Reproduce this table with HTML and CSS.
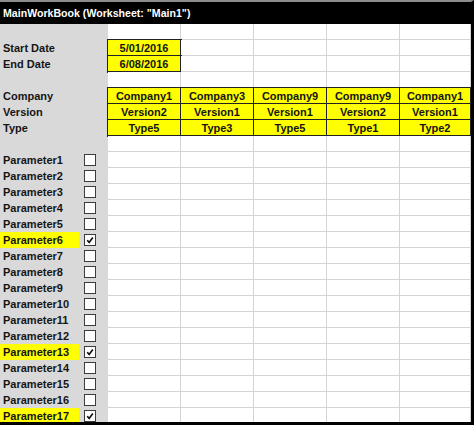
FILE: index.html
```html
<!DOCTYPE html>
<html>
<head>
<meta charset="utf-8">
<link rel="stylesheet" href="styles.css">
</head>
<body>
<div class="window">
  <div class="title">MainWorkBook (Worksheet: "Main1")</div>
  <div class="sheet">
    <div class="row"><div class="label"></div><div class="chk"></div><div class="cell"></div><div class="cell"></div><div class="cell"></div><div class="cell"></div><div class="cell"></div></div>
    <div class="row"><div class="label">Start Date</div><div class="chk"></div><div class="cell y">5/01/2016</div><div class="cell"></div><div class="cell"></div><div class="cell"></div><div class="cell"></div></div>
    <div class="row"><div class="label">End Date</div><div class="chk"></div><div class="cell y">6/08/2016</div><div class="cell"></div><div class="cell"></div><div class="cell"></div><div class="cell"></div></div>
    <div class="row"><div class="label"></div><div class="chk"></div><div class="cell"></div><div class="cell"></div><div class="cell"></div><div class="cell"></div><div class="cell"></div></div>
    <div class="row"><div class="label">Company</div><div class="chk"></div><div class="cell y">Company1</div><div class="cell y">Company3</div><div class="cell y">Company9</div><div class="cell y">Company9</div><div class="cell y">Company1</div></div>
    <div class="row"><div class="label">Version</div><div class="chk"></div><div class="cell y">Version2</div><div class="cell y">Version1</div><div class="cell y">Version1</div><div class="cell y">Version2</div><div class="cell y">Version1</div></div>
    <div class="row"><div class="label">Type</div><div class="chk"></div><div class="cell y">Type5</div><div class="cell y">Type3</div><div class="cell y">Type5</div><div class="cell y">Type1</div><div class="cell y">Type2</div></div>
    <div class="row"><div class="label"></div><div class="chk"></div><div class="cell"></div><div class="cell"></div><div class="cell"></div><div class="cell"></div><div class="cell"></div></div>
    <div class="row"><div class="label">Parameter1</div><div class="chk"><span class="box"></span></div><div class="cell"></div><div class="cell"></div><div class="cell"></div><div class="cell"></div><div class="cell"></div></div>
    <div class="row"><div class="label">Parameter2</div><div class="chk"><span class="box"></span></div><div class="cell"></div><div class="cell"></div><div class="cell"></div><div class="cell"></div><div class="cell"></div></div>
    <div class="row"><div class="label">Parameter3</div><div class="chk"><span class="box"></span></div><div class="cell"></div><div class="cell"></div><div class="cell"></div><div class="cell"></div><div class="cell"></div></div>
    <div class="row"><div class="label">Parameter4</div><div class="chk"><span class="box"></span></div><div class="cell"></div><div class="cell"></div><div class="cell"></div><div class="cell"></div><div class="cell"></div></div>
    <div class="row"><div class="label">Parameter5</div><div class="chk"><span class="box"></span></div><div class="cell"></div><div class="cell"></div><div class="cell"></div><div class="cell"></div><div class="cell"></div></div>
    <div class="row"><div class="label hl">Parameter6</div><div class="chk"><span class="box"><svg viewBox="0 0 10 10" width="10" height="10"><path d="M2.2 5.2 L4.2 7.4 L7.8 2.6" fill="none" stroke="#111" stroke-width="1.7"/></svg></span></div><div class="cell"></div><div class="cell"></div><div class="cell"></div><div class="cell"></div><div class="cell"></div></div>
    <div class="row"><div class="label">Parameter7</div><div class="chk"><span class="box"></span></div><div class="cell"></div><div class="cell"></div><div class="cell"></div><div class="cell"></div><div class="cell"></div></div>
    <div class="row"><div class="label">Parameter8</div><div class="chk"><span class="box"></span></div><div class="cell"></div><div class="cell"></div><div class="cell"></div><div class="cell"></div><div class="cell"></div></div>
    <div class="row"><div class="label">Parameter9</div><div class="chk"><span class="box"></span></div><div class="cell"></div><div class="cell"></div><div class="cell"></div><div class="cell"></div><div class="cell"></div></div>
    <div class="row"><div class="label">Parameter10</div><div class="chk"><span class="box"></span></div><div class="cell"></div><div class="cell"></div><div class="cell"></div><div class="cell"></div><div class="cell"></div></div>
    <div class="row"><div class="label">Parameter11</div><div class="chk"><span class="box"></span></div><div class="cell"></div><div class="cell"></div><div class="cell"></div><div class="cell"></div><div class="cell"></div></div>
    <div class="row"><div class="label">Parameter12</div><div class="chk"><span class="box"></span></div><div class="cell"></div><div class="cell"></div><div class="cell"></div><div class="cell"></div><div class="cell"></div></div>
    <div class="row"><div class="label hl">Parameter13</div><div class="chk"><span class="box"><svg viewBox="0 0 10 10" width="10" height="10"><path d="M2.2 5.2 L4.2 7.4 L7.8 2.6" fill="none" stroke="#111" stroke-width="1.7"/></svg></span></div><div class="cell"></div><div class="cell"></div><div class="cell"></div><div class="cell"></div><div class="cell"></div></div>
    <div class="row"><div class="label">Parameter14</div><div class="chk"><span class="box"></span></div><div class="cell"></div><div class="cell"></div><div class="cell"></div><div class="cell"></div><div class="cell"></div></div>
    <div class="row"><div class="label">Parameter15</div><div class="chk"><span class="box"></span></div><div class="cell"></div><div class="cell"></div><div class="cell"></div><div class="cell"></div><div class="cell"></div></div>
    <div class="row"><div class="label">Parameter16</div><div class="chk"><span class="box"></span></div><div class="cell"></div><div class="cell"></div><div class="cell"></div><div class="cell"></div><div class="cell"></div></div>
    <div class="row"><div class="label hl">Parameter17</div><div class="chk"><span class="box"><svg viewBox="0 0 10 10" width="10" height="10"><path d="M2.2 5.2 L4.2 7.4 L7.8 2.6" fill="none" stroke="#111" stroke-width="1.7"/></svg></span></div><div class="cell"></div><div class="cell"></div><div class="cell"></div><div class="cell"></div><div class="cell"></div></div>
  </div>
</div>
</body>
</html>
```

FILE: styles.css
```css
html, body {
  margin: 0;
  padding: 0;
  background: #fff;
}

.window {
  width: 474px;
  height: 425px;
  box-sizing: border-box;
  border-right: 3px solid #000;
  border-bottom: 3px solid #000;
  border-top: 2px solid #8c8c8c;
  overflow: hidden;
  font-family: "Liberation Sans", Arial, sans-serif;
  font-weight: bold;
  font-size: 11px;
  color: #151515;
}

.title {
  height: 22px;
  line-height: 23px;
  background: #000;
  color: #fff;
  padding-left: 3px;
  font-size: 10.6px;
  white-space: nowrap;
}

.sheet {
  background: #d9d9d9;
  height: 398px;
  overflow: hidden;
}

.row {
  display: grid;
  grid-template-columns: 79px 29px 73px 73px 73px 73px 71px;
  grid-template-rows: 16px;
  height: 16px;
  line-height: 17px;
}

.label {
  padding-left: 3px;
  white-space: nowrap;
}

.label.hl {
  background: #ffff00;
}

.box {
  display: block;
  box-sizing: border-box;
  width: 12px;
  height: 12px;
  margin: 2px 0 0 5px;
  background: #fff;
  border: 1px solid #3a3a3a;
}

.box svg {
  display: block;
}

.cell {
  box-sizing: border-box;
  background: #fff;
  border-right: 1px solid #d4d4d4;
  border-bottom: 1px solid #d4d4d4;
  text-align: center;
  white-space: nowrap;
}

.cell.y {
  background: #ffff00;
  border-right-color: #222;
  border-bottom-color: #222;
  box-shadow: 0 0 0 1px #222;
}
```
